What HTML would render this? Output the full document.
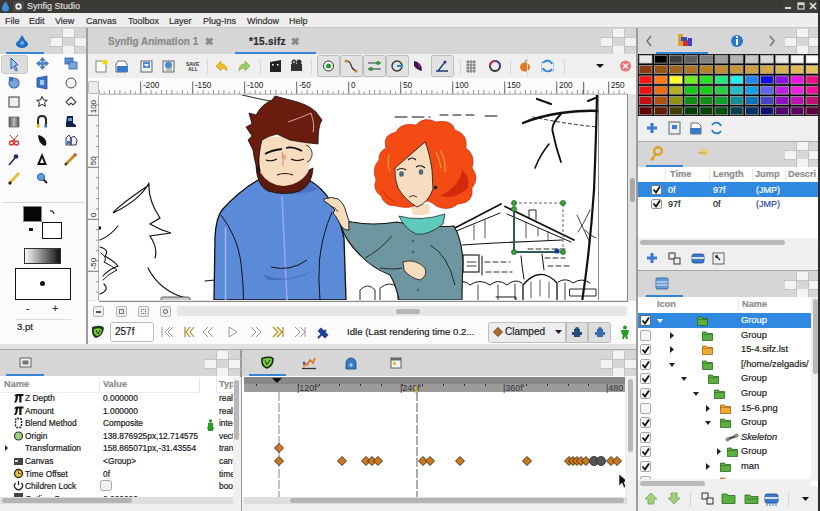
<!DOCTYPE html>
<html><head><meta charset="utf-8">
<style>
*{box-sizing:border-box}
body{-webkit-text-stroke:0.2px;margin:0;width:820px;height:511px;overflow:hidden;position:relative;background:#e6e6e6;font-family:"Liberation Sans",sans-serif;font-size:9px;color:#2e3436}
.a{position:absolute}
.hdr{background:#d6d6d6}
.grip{position:absolute;width:37px;height:26px}
.grip:before{content:"";position:absolute;left:0;top:1px;width:37px;height:25px;background:linear-gradient(#c4c4c4,#c4c4c4) 12px 0/1px 25px no-repeat,linear-gradient(#c4c4c4,#c4c4c4) 24px 0/1px 25px no-repeat,linear-gradient(#c4c4c4,#c4c4c4) 0 8px/37px 1px no-repeat,linear-gradient(#c4c4c4,#c4c4c4) 0 17px/37px 1px no-repeat}
.grip i{position:absolute;width:11px;height:8px;background:#f3f3f3;border-radius:1px}
.tb{background:#efefef}
.t{position:absolute;white-space:nowrap}
</style></head><body>
<!-- title bar -->
<div class="a" style="left:0;top:0;width:820px;height:13px;background:#3b3a37"></div>
<div class="t" style="left:27px;top:0px;font-size:9px;color:#dcdcdc;line-height:12px">Synfig Studio</div>
<svg class="a" style="left:0;top:0" width="26" height="13"><path d="M5.5 1.5 Q9 6 9 8.5 Q9 11.5 5.5 11.5 Q2 11.5 2 8.5 Q2 6 5.5 1.5 Z" fill="#3a8ee0"/><rect x="13" y="1" width="11" height="11" fill="#4a4945"/><circle cx="18.5" cy="6.5" r="3.2" fill="#eee"/><circle cx="18.5" cy="6.5" r="1.3" fill="#333"/></svg>
<svg class="a" style="left:780px;top:0" width="40" height="13"><rect x="3" y="1" width="10" height="10" rx="1.5" fill="#48474340"/><rect x="16" y="1" width="10" height="10" rx="1.5" fill="#48474340"/><rect x="28" y="1" width="10" height="10" rx="1.5" fill="#48474340"/><rect x="5" y="7" width="6" height="2" fill="#d8d8d8"/><rect x="18" y="3" width="6" height="6" fill="none" stroke="#d8d8d8" stroke-width="1.2"/><rect x="18" y="3" width="6" height="2" fill="#d8d8d8"/><path d="M30 3 l6 6 M36 3 l-6 6" stroke="#e8e8e8" stroke-width="1.6"/></svg>
<!-- menu bar -->
<div class="a" style="left:0;top:13px;width:820px;height:15px;background:#eeeeee"></div>
<div class="t" style="left:5px;top:16px;font-size:9px;line-height:11px;color:#333">File</div>
<div class="t" style="left:29px;top:16px;font-size:9px;line-height:11px;color:#333">Edit</div>
<div class="t" style="left:55px;top:16px;font-size:9px;line-height:11px;color:#333">View</div>
<div class="t" style="left:86px;top:16px;font-size:9px;line-height:11px;color:#333">Canvas</div>
<div class="t" style="left:128px;top:16px;font-size:9px;line-height:11px;color:#333">Toolbox</div>
<div class="t" style="left:169px;top:16px;font-size:9px;line-height:11px;color:#333">Layer</div>
<div class="t" style="left:203px;top:16px;font-size:9px;line-height:11px;color:#333">Plug-Ins</div>
<div class="t" style="left:247px;top:16px;font-size:9px;line-height:11px;color:#333">Window</div>
<div class="t" style="left:289px;top:16px;font-size:9px;line-height:11px;color:#333">Help</div>

<div class="a" style="left:0;top:27px;width:820px;height:1px;background:#c8c8c8"></div>
<!-- toolbox panel -->
<div class="a hdr" style="left:0;top:28px;width:86px;height:26px"></div>
<div class="a" style="left:0;top:54px;width:86px;height:290px;background:#fbfbfb"></div>
<div class="a" style="left:86px;top:28px;width:2px;height:318px;background:#9c9c9c"></div>
<!-- toolbox content -->
<svg class="a" style="left:0;top:28px" width="86" height="26">
<path d="M22 7 L28 17 L16 17 Z" fill="#1f6fc0"/><ellipse cx="22" cy="16" rx="6" ry="4" fill="#1f6fc0"/><ellipse cx="22" cy="15" rx="2" ry="2" fill="#6aaef0"/>
<rect x="6" y="24" width="38" height="2" fill="#3584d6"/>
</svg>
<div class="grip" style="left:50px;top:28px"><i style="left:13px;top:1px"></i><i style="left:1px;top:9.5px"></i><i style="left:25px;top:9.5px"></i><i style="left:13px;top:18px"></i></div>
<div class="a" style="left:1px;top:55px;width:27px;height:19px;background:#dcdcdc;border:1px solid #c9c9c9;border-radius:3px"></div>
<svg class="a" style="left:0;top:54px" width="86" height="140">
<!-- row1 -->
<path d="M11 4 L11 15 L13.5 12.5 L16 17 L17.5 16 L15 11.5 L18 11 Z" fill="#a9c8f0" stroke="#2a5aa8" stroke-width="1"/>
<g fill="#4a86d0" stroke="#2a5aa8" stroke-width="0.5"><path d="M42.5 3.5 L45 6.3 H40 Z"/><path d="M42.5 15.5 L45 12.7 H40 Z"/><path d="M36.5 9.5 L39.3 7 V12 Z"/><path d="M48.5 9.5 L45.7 7 V12 Z"/></g><path d="M42.5 6 V13 M39 9.5 H46" stroke="#3a74c0" stroke-width="1.8"/><circle cx="42.5" cy="9.5" r="1.8" fill="#5a96e0" stroke="#2a5aa8" stroke-width="0.5"/>
<rect x="65" y="4" width="8" height="6" fill="#5d8fd0" stroke="#2c5fa8" stroke-width="0.8"/><rect x="69" y="8" width="8" height="7" fill="#7fa6dc" stroke="#2c5fa8" stroke-width="0.8"/>
<!-- row2 -->
<circle cx="14" cy="29" r="5" fill="#7da2d8" stroke="#3f6fb8" stroke-width="1.2"/><rect x="9" y="23" width="4" height="4" fill="#3f6fb8"/>
<path d="M37 24 L47 22 L47 35 L37 33 Z" fill="#3b75c8" stroke="#24529a" stroke-width="0.8"/><rect x="40" y="26" width="4" height="5" fill="#a8c6ee"/>
<circle cx="71" cy="29" r="5" fill="#f4f4f4" stroke="#4a4a4a" stroke-width="1"/>
<!-- row3 -->
<rect x="9" y="43" width="10" height="10" fill="#eee" stroke="#5a5a5a" stroke-width="1.2"/>
<path d="M42 42.5 L43.6 46 L47.3 46.3 L44.5 48.7 L45.4 52.3 L42 50.4 L38.6 52.3 L39.5 48.7 L36.7 46.3 L40.4 46 Z" fill="#fff" stroke="#222" stroke-width="1"/>
<path d="M66 48 L71 43 L76 48 L73 51 L71 49 L69 51 Z" fill="#fff" stroke="#444" stroke-width="1.1"/>
<!-- row4 -->
<defs><linearGradient id="gg" x1="0" x2="1"><stop offset="0" stop-color="#555"/><stop offset="0.5" stop-color="#bbb"/><stop offset="1" stop-color="#555"/></linearGradient></defs>
<rect x="9" y="63" width="10" height="10" fill="url(#gg)" stroke="#666" stroke-width="0.8"/>
<path d="M38 73 L38 66 Q38 62 42 62 Q46 62 46 66 L46 73" fill="none" stroke="#2a2a2a" stroke-width="2"/><rect x="37" y="70" width="2.5" height="3.5" fill="#e0b000"/><rect x="44.5" y="70" width="2.5" height="3.5" fill="#3070d0"/>
<path d="M67 62 L73 62 L73 69 L76 71 L76 73 L66 73 L66 69 Z" fill="#14204a"/><rect x="68" y="64" width="4" height="3" fill="#6b8fd8"/>
<!-- row5 -->
<path d="M10 81 L15 87 M18 81 L13 87" stroke="#c03030" stroke-width="1"/><circle cx="11.5" cy="89" r="2" fill="none" stroke="#e03030" stroke-width="1.4"/><circle cx="16.5" cy="89" r="2" fill="none" stroke="#e03030" stroke-width="1.4"/>
<path d="M38 81 Q44 82 46 87 Q47 91 45 92 Q40 90 39 86 Q38 83 38 81 Z" fill="#111"/>
<path d="M66 84 L69 81 L71 84 L71 91 L66 91 Z M71 84 L74 82 L77 86 L76 91 L71 91 Z" fill="#eef" stroke="#223" stroke-width="0.9"/><rect x="67" y="87" width="3" height="3" fill="#4a70c0"/>
<!-- row6 -->
<path d="M9 111 L15 104" stroke="#1c2c6a" stroke-width="1.6"/><circle cx="16" cy="102.5" r="2.3" fill="#1c2c6a"/>
<path d="M42 99 L47 111 L37 111 Z" fill="#111"/><path d="M42 104 L44 109 L40 109 Z" fill="#fff"/>
<path d="M65 111 L76 100" stroke="#c8861a" stroke-width="2.6"/><path d="M65 111 L67 109" stroke="#333" stroke-width="2"/><path d="M74.5 101.5 L76 100" stroke="#d04a2a" stroke-width="2.6"/>
<!-- row7 -->
<path d="M9 130 L19 119" stroke="#e8c030" stroke-width="2.8"/><path d="M9 130 L11 128" stroke="#222" stroke-width="2.5"/>
<circle cx="41" cy="123" r="3.6" fill="#5a9ee0" stroke="#2a6ab8" stroke-width="1"/><path d="M43.5 125.5 L47 129" stroke="#222" stroke-width="2"/>
</svg>
<div class="a" style="left:2px;top:202px;width:83px;height:1px;background:#d8d8d8"></div>
<div class="a" style="left:42px;top:222px;width:20px;height:17px;background:#fff;border:1px solid #111"></div>
<div class="a" style="left:23px;top:206px;width:19px;height:16px;background:#060606;border:1px solid #888"></div>
<div class="a" style="left:29px;top:228px;width:4px;height:3px;background:#111"></div>
<svg class="a" style="left:49px;top:209px" width="8" height="8"><path d="M1 2 Q4 1 5 5" stroke="#222" stroke-width="1.2" fill="none"/></svg>
<div class="a" style="left:24px;top:248px;width:37px;height:16px;border:1px solid #333;background:linear-gradient(to right,#fafafa,#111)"></div>
<div class="a" style="left:15px;top:268px;width:56px;height:32px;border:1.5px solid #111;background:#fff"></div>
<div class="a" style="left:40px;top:281px;width:5px;height:5px;border-radius:50%;background:#111"></div>
<div class="t" style="left:26px;top:303px;font-size:10px;color:#333">-</div>
<div class="t" style="left:52px;top:302px;font-size:11px;color:#333">+</div>
<div class="a" style="left:15px;top:319px;width:56px;height:1px;background:#ddd"></div>
<div class="t" style="left:17px;top:321px;font-size:9.5px;color:#222">3.pt</div>


<!-- canvas panel -->
<div class="a hdr" style="left:88px;top:28px;width:549px;height:26px"></div>
<div class="a tb" style="left:88px;top:54px;width:549px;height:24px"></div>
<div class="a" style="left:88px;top:78px;width:539px;height:17px;background:#f7f7f7"></div>
<div class="a" style="left:88px;top:95px;width:11px;height:205px;background:#f7f7f7"></div>
<div class="a" style="left:99px;top:95px;width:528px;height:205px;background:#ffffff"></div>
<div class="a" style="left:628px;top:94px;width:8px;height:207px;background:#e2e2e2"></div><div class="a" style="left:627px;top:78px;width:9px;height:16px;background:#fafafa"></div>

<!-- tabs -->
<div class="t" style="left:108px;top:35px;font-size:10px;font-weight:bold;color:#8a8a8a;line-height:13px">Synfig Animation 1</div>
<div class="t" style="left:205px;top:35px;font-size:10px;font-weight:bold;color:#8a8a8a;line-height:13px">&#x2716;</div>
<div class="t" style="left:249px;top:35px;font-size:10px;font-weight:bold;color:#2b2b2b;line-height:13px;letter-spacing:0.3px">*15.sifz</div>
<div class="t" style="left:291px;top:35px;font-size:10px;font-weight:bold;color:#8a8a8a;line-height:13px">&#x2716;</div>
<div class="a" style="left:235px;top:52px;width:81px;height:2px;background:#3584d6"></div>
<div class="grip" style="left:600px;top:28px"><i style="left:13px;top:1px"></i><i style="left:1px;top:9.5px"></i><i style="left:25px;top:9.5px"></i><i style="left:13px;top:18px"></i></div>
<!-- toolbar -->
<svg class="a" style="left:88px;top:54px" width="549" height="24">
<rect x="8" y="7" width="10" height="11" fill="#fdfdf5" stroke="#777" stroke-width="0.9"/><circle cx="17" cy="8" r="2.6" fill="#f0e000"/>
<path d="M30 7 h7 l2 3 v8 h-11 v-8 z" fill="#fff" stroke="#444" stroke-width="0.8"/><rect x="29" y="12" width="11" height="6" rx="1" fill="#3a78c8"/>
<rect x="53" y="7" width="11" height="11" fill="#f2f2f2" stroke="#555" stroke-width="0.9"/><rect x="55" y="8" width="7" height="6" fill="#4a8ad8"/><path d="M56 10 l2.5 3 l2.5-3" fill="#fff"/>
<rect x="75" y="7" width="11" height="11" fill="#f2f2f2" stroke="#555" stroke-width="0.9"/><circle cx="80.5" cy="11" r="3.5" fill="#4a8ad8"/><rect x="78" y="14" width="6" height="3" fill="#bbb"/>
<text x="98" y="11.5" font-size="5" fill="#333" font-weight="bold">SAVE</text><text x="100" y="17" font-size="5" fill="#333" font-weight="bold">ALL</text>
<rect x="119" y="5" width="1" height="15" fill="#d8d8d8"/>
<path d="M128 12 l5 -5 v3 q6 0 6 7 q-2 -3 -6 -3 v3 z" fill="#f0c020" stroke="#c09000" stroke-width="0.6"/>
<path d="M162 12 l-5 -5 v3 q-6 0 -6 7 q2 -3 6 -3 v3 z" fill="#9ed060" stroke="#70a030" stroke-width="0.6"/>
<rect x="172" y="5" width="1" height="15" fill="#d8d8d8"/>
<rect x="182" y="8" width="11" height="10" fill="#222"/><path d="M182 8 l11 -2 v2 z" fill="#222"/><rect x="184" y="10" width="1.5" height="1.5" fill="#fff"/><rect x="189" y="10" width="1.5" height="1.5" fill="#fff"/>
<rect x="203" y="10" width="11" height="7" fill="#333"/><circle cx="206" cy="8" r="2.5" fill="#333"/><circle cx="211" cy="8" r="2.5" fill="#333"/><circle cx="206" cy="8" r="1" fill="#ccc"/>
<rect x="223" y="5" width="1" height="15" fill="#d8d8d8"/>
<rect x="229.5" y="1.5" width="22" height="21" rx="2" fill="#e2e2e2" stroke="#bdbdbd"/>
<rect x="252.5" y="1.5" width="22" height="21" rx="2" fill="#e2e2e2" stroke="#bdbdbd"/>
<rect x="275.5" y="1.5" width="22" height="21" rx="2" fill="#e2e2e2" stroke="#bdbdbd"/>
<rect x="298.5" y="1.5" width="22" height="21" rx="2" fill="#e2e2e2" stroke="#bdbdbd"/>
<circle cx="240.5" cy="12" r="5" fill="#fff" stroke="#333" stroke-width="1"/><circle cx="240.5" cy="12" r="2.5" fill="#2a9a3a"/>
<path d="M258 7 q4 0 5 4 q1 4 5 6" fill="none" stroke="#333" stroke-width="1.2"/><circle cx="258" cy="7" r="1.5" fill="#d08020"/><circle cx="268" cy="17" r="1.5" fill="#d08020"/>
<path d="M280 9 h13 M280 15 h13" stroke="#333" stroke-width="1.1"/><circle cx="290" cy="9" r="2" fill="#2a9a3a"/><circle cx="283" cy="15" r="2" fill="#2a9a3a"/>
<circle cx="309" cy="12" r="5" fill="none" stroke="#333" stroke-width="1.4"/><path d="M309 12 h6" stroke="#2a8ac8" stroke-width="2"/>
<path d="M326 7 q8 1 8 10 q-5 -1 -8 -5 z" fill="#401050"/><path d="M330 9 l2 5" stroke="#c03060" stroke-width="1"/>
<rect x="343.5" y="1.5" width="22" height="21" rx="2" fill="#e2e2e2" stroke="#bdbdbd"/>
<path d="M348 17 h12 M350 17 l7 -9" stroke="#223a7a" stroke-width="1.3" fill="none"/><circle cx="357" cy="8" r="1.5" fill="#223a7a"/>
<rect x="372" y="5" width="1" height="15" fill="#d8d8d8"/>
<path d="M378 8 h10 M378 11 h10 M378 14 h10 M378 17 h10 M380 6 v13 M383 6 v13 M386 6 v13" stroke="#555" stroke-width="0.8"/>
<circle cx="407" cy="12" r="5" fill="none" stroke="#333" stroke-width="2"/><path d="M402 12 a5 5 0 0 1 5 -5" stroke="#d03030" stroke-width="2" fill="none"/><path d="M407 7 a5 5 0 0 1 5 5" stroke="#3050c0" stroke-width="2" fill="none"/>
<rect x="422" y="5" width="1" height="15" fill="#d8d8d8"/>
<ellipse cx="437" cy="13" rx="5" ry="4.5" fill="#e07a20"/><path d="M437 8 q2 -3 3 -3" stroke="#a05010" fill="none"/>
<path d="M455 9 a5 5 0 0 1 9 1 M464 15 a5 5 0 0 1 -9 -1" fill="none" stroke="#2a78c8" stroke-width="1.8"/><rect x="453.5" y="8" width="12" height="9" fill="none" stroke="#7ab0e8" stroke-width="0.6"/>
<rect x="476" y="5" width="1" height="15" fill="#d8d8d8"/>
<path d="M508 10 h8 l-4 4 z" fill="#111"/>
<circle cx="537.5" cy="12" r="5.5" fill="#e87878"/><path d="M535 9.5 l5 5 M540 9.5 l-5 5" stroke="#fff" stroke-width="1.3"/>
</svg>
<div class="a" style="left:527px;top:55px;width:1px;height:22px;background:#ddd"></div>
<!-- top ruler -->
<div class="a" style="left:88px;top:78px;width:540px;height:16px;background:#fcfcfc"></div><svg class="a" style="left:88px;top:78px" width="540" height="17"><path d="M11.1 12 V16" stroke="#777" stroke-width="0.8"/><path d="M16.3 13.5 V16" stroke="#888" stroke-width="0.8"/><path d="M21.5 12 V16" stroke="#777" stroke-width="0.8"/><path d="M26.7 12 V16" stroke="#777" stroke-width="0.8"/><path d="M31.9 12 V16" stroke="#777" stroke-width="0.8"/><path d="M37.1 13.5 V16" stroke="#888" stroke-width="0.8"/><path d="M42.3 12 V16" stroke="#777" stroke-width="0.8"/><path d="M47.5 13.5 V16" stroke="#888" stroke-width="0.8"/><path d="M52.7 3.5 V16" stroke="#555" stroke-width="0.9"/><text x="54.9" y="10.3" font-size="8.2" fill="#222">-200</text><path d="M57.9 13.5 V16" stroke="#888" stroke-width="0.8"/><path d="M63.1 12 V16" stroke="#777" stroke-width="0.8"/><path d="M68.3 13.5 V16" stroke="#888" stroke-width="0.8"/><path d="M73.5 12 V16" stroke="#777" stroke-width="0.8"/><path d="M78.7 12 V16" stroke="#777" stroke-width="0.8"/><path d="M83.9 12 V16" stroke="#777" stroke-width="0.8"/><path d="M89.1 13.5 V16" stroke="#888" stroke-width="0.8"/><path d="M94.3 12 V16" stroke="#777" stroke-width="0.8"/><path d="M99.5 13.5 V16" stroke="#888" stroke-width="0.8"/><path d="M104.7 3.5 V16" stroke="#555" stroke-width="0.9"/><text x="106.9" y="10.3" font-size="8.2" fill="#222">-150</text><path d="M109.9 13.5 V16" stroke="#888" stroke-width="0.8"/><path d="M115.1 12 V16" stroke="#777" stroke-width="0.8"/><path d="M120.3 13.5 V16" stroke="#888" stroke-width="0.8"/><path d="M125.5 12 V16" stroke="#777" stroke-width="0.8"/><path d="M130.7 12 V16" stroke="#777" stroke-width="0.8"/><path d="M135.9 12 V16" stroke="#777" stroke-width="0.8"/><path d="M141.1 13.5 V16" stroke="#888" stroke-width="0.8"/><path d="M146.3 12 V16" stroke="#777" stroke-width="0.8"/><path d="M151.5 13.5 V16" stroke="#888" stroke-width="0.8"/><path d="M156.7 3.5 V16" stroke="#555" stroke-width="0.9"/><text x="158.9" y="10.3" font-size="8.2" fill="#222">-100</text><path d="M161.9 13.5 V16" stroke="#888" stroke-width="0.8"/><path d="M167.1 12 V16" stroke="#777" stroke-width="0.8"/><path d="M172.3 13.5 V16" stroke="#888" stroke-width="0.8"/><path d="M177.5 12 V16" stroke="#777" stroke-width="0.8"/><path d="M182.7 12 V16" stroke="#777" stroke-width="0.8"/><path d="M187.9 12 V16" stroke="#777" stroke-width="0.8"/><path d="M193.1 13.5 V16" stroke="#888" stroke-width="0.8"/><path d="M198.3 12 V16" stroke="#777" stroke-width="0.8"/><path d="M203.5 13.5 V16" stroke="#888" stroke-width="0.8"/><path d="M208.7 3.5 V16" stroke="#555" stroke-width="0.9"/><text x="210.9" y="10.3" font-size="8.2" fill="#222">-50</text><path d="M213.9 13.5 V16" stroke="#888" stroke-width="0.8"/><path d="M219.1 12 V16" stroke="#777" stroke-width="0.8"/><path d="M224.3 13.5 V16" stroke="#888" stroke-width="0.8"/><path d="M229.5 12 V16" stroke="#777" stroke-width="0.8"/><path d="M234.7 12 V16" stroke="#777" stroke-width="0.8"/><path d="M239.9 12 V16" stroke="#777" stroke-width="0.8"/><path d="M245.1 13.5 V16" stroke="#888" stroke-width="0.8"/><path d="M250.3 12 V16" stroke="#777" stroke-width="0.8"/><path d="M255.5 13.5 V16" stroke="#888" stroke-width="0.8"/><path d="M260.7 3.5 V16" stroke="#555" stroke-width="0.9"/><text x="262.9" y="10.3" font-size="8.2" fill="#222">0</text><path d="M265.9 13.5 V16" stroke="#888" stroke-width="0.8"/><path d="M271.1 12 V16" stroke="#777" stroke-width="0.8"/><path d="M276.3 13.5 V16" stroke="#888" stroke-width="0.8"/><path d="M281.5 12 V16" stroke="#777" stroke-width="0.8"/><path d="M286.7 12 V16" stroke="#777" stroke-width="0.8"/><path d="M291.9 12 V16" stroke="#777" stroke-width="0.8"/><path d="M297.1 13.5 V16" stroke="#888" stroke-width="0.8"/><path d="M302.3 12 V16" stroke="#777" stroke-width="0.8"/><path d="M307.5 13.5 V16" stroke="#888" stroke-width="0.8"/><path d="M312.7 3.5 V16" stroke="#555" stroke-width="0.9"/><text x="314.9" y="10.3" font-size="8.2" fill="#222">50</text><path d="M317.9 13.5 V16" stroke="#888" stroke-width="0.8"/><path d="M323.1 12 V16" stroke="#777" stroke-width="0.8"/><path d="M328.3 13.5 V16" stroke="#888" stroke-width="0.8"/><path d="M333.5 12 V16" stroke="#777" stroke-width="0.8"/><path d="M338.7 12 V16" stroke="#777" stroke-width="0.8"/><path d="M343.9 12 V16" stroke="#777" stroke-width="0.8"/><path d="M349.1 13.5 V16" stroke="#888" stroke-width="0.8"/><path d="M354.3 12 V16" stroke="#777" stroke-width="0.8"/><path d="M359.5 13.5 V16" stroke="#888" stroke-width="0.8"/><path d="M364.7 3.5 V16" stroke="#555" stroke-width="0.9"/><text x="366.9" y="10.3" font-size="8.2" fill="#222">100</text><path d="M369.9 13.5 V16" stroke="#888" stroke-width="0.8"/><path d="M375.1 12 V16" stroke="#777" stroke-width="0.8"/><path d="M380.3 13.5 V16" stroke="#888" stroke-width="0.8"/><path d="M385.5 12 V16" stroke="#777" stroke-width="0.8"/><path d="M390.7 12 V16" stroke="#777" stroke-width="0.8"/><path d="M395.9 12 V16" stroke="#777" stroke-width="0.8"/><path d="M401.1 13.5 V16" stroke="#888" stroke-width="0.8"/><path d="M406.3 12 V16" stroke="#777" stroke-width="0.8"/><path d="M411.5 13.5 V16" stroke="#888" stroke-width="0.8"/><path d="M416.7 3.5 V16" stroke="#555" stroke-width="0.9"/><text x="418.9" y="10.3" font-size="8.2" fill="#222">150</text><path d="M421.9 13.5 V16" stroke="#888" stroke-width="0.8"/><path d="M427.1 12 V16" stroke="#777" stroke-width="0.8"/><path d="M432.3 13.5 V16" stroke="#888" stroke-width="0.8"/><path d="M437.5 12 V16" stroke="#777" stroke-width="0.8"/><path d="M442.7 12 V16" stroke="#777" stroke-width="0.8"/><path d="M447.9 12 V16" stroke="#777" stroke-width="0.8"/><path d="M453.1 13.5 V16" stroke="#888" stroke-width="0.8"/><path d="M458.3 12 V16" stroke="#777" stroke-width="0.8"/><path d="M463.5 13.5 V16" stroke="#888" stroke-width="0.8"/><path d="M468.7 3.5 V16" stroke="#555" stroke-width="0.9"/><text x="470.9" y="10.3" font-size="8.2" fill="#222">200</text><path d="M473.9 13.5 V16" stroke="#888" stroke-width="0.8"/><path d="M479.1 12 V16" stroke="#777" stroke-width="0.8"/><path d="M484.3 13.5 V16" stroke="#888" stroke-width="0.8"/><path d="M489.5 12 V16" stroke="#777" stroke-width="0.8"/><path d="M494.7 12 V16" stroke="#777" stroke-width="0.8"/><path d="M499.9 12 V16" stroke="#777" stroke-width="0.8"/><path d="M505.1 13.5 V16" stroke="#888" stroke-width="0.8"/><path d="M510.3 12 V16" stroke="#777" stroke-width="0.8"/><path d="M515.5 13.5 V16" stroke="#888" stroke-width="0.8"/><path d="M520.7 3.5 V16" stroke="#555" stroke-width="0.9"/><text x="522.9" y="10.3" font-size="8.2" fill="#222">250</text><path d="M525.9 13.5 V16" stroke="#888" stroke-width="0.8"/><path d="M531.1 12 V16" stroke="#777" stroke-width="0.8"/><path d="M536.3 13.5 V16" stroke="#888" stroke-width="0.8"/><path d="M11 16.2 H540" stroke="#999" stroke-width="0.8"/><path d="M495.7 4 V16" stroke="#444" stroke-width="0.9"/></svg>
<div class="a" style="left:88px;top:81px;width:11px;height:13px;background:#ececec;border:1px solid #bbb;border-radius:2px"></div>
<!-- left ruler -->
<svg class="a" style="left:88px;top:95px" width="11" height="205"><path d="M8 197.1 H11" stroke="#777" stroke-width="0.8"/><path d="M8 186.7 H11" stroke="#777" stroke-width="0.8"/><path d="M0 176.3 H11" stroke="#555" stroke-width="0.8"/><text transform="translate(7.5 174.3) rotate(-90)" font-size="8" fill="#222">-50</text><path d="M8 165.9 H11" stroke="#777" stroke-width="0.8"/><path d="M8 155.5 H11" stroke="#777" stroke-width="0.8"/><path d="M8 145.1 H11" stroke="#777" stroke-width="0.8"/><path d="M8 134.7 H11" stroke="#777" stroke-width="0.8"/><path d="M0 124.3 H11" stroke="#555" stroke-width="0.8"/><text transform="translate(7.5 122.3) rotate(-90)" font-size="8" fill="#222">0</text><path d="M8 113.9 H11" stroke="#777" stroke-width="0.8"/><path d="M8 103.5 H11" stroke="#777" stroke-width="0.8"/><path d="M8 93.1 H11" stroke="#777" stroke-width="0.8"/><path d="M8 82.7 H11" stroke="#777" stroke-width="0.8"/><path d="M0 72.3 H11" stroke="#555" stroke-width="0.8"/><text transform="translate(7.5 70.3) rotate(-90)" font-size="8" fill="#222">50</text><path d="M8 61.9 H11" stroke="#777" stroke-width="0.8"/><path d="M8 51.5 H11" stroke="#777" stroke-width="0.8"/><path d="M8 41.1 H11" stroke="#777" stroke-width="0.8"/><path d="M8 30.7 H11" stroke="#777" stroke-width="0.8"/><path d="M0 20.3 H11" stroke="#555" stroke-width="0.8"/><text transform="translate(7.5 18.3) rotate(-90)" font-size="8" fill="#222">100</text><path d="M8 9.9 H11" stroke="#777" stroke-width="0.8"/><path d="M10.5 0 V205" stroke="#999" stroke-width="0.8"/></svg>
<!-- v scrollbar -->
<div class="a" style="left:630px;top:178px;width:5px;height:24px;background:#a8a8a8;border-radius:3px"></div>
<div class="a" style="left:598px;top:95px;width:1px;height:205px;background:#888"></div>

<svg class="a" style="left:99px;top:95px" width="499" height="205" viewBox="99 95 499 205">
<g fill="none" stroke="#111" stroke-linecap="round">
<!-- top line -->
<path d="M242 95 Q262 100 282 103" stroke-width="0.9"/>
<!-- left tree -->
<path d="M149 183 Q140 200 113 213 Q118 206 149 185" stroke-width="1.1"/>
<path d="M149 184 Q148 200 160 218 L150 224 Q160 230 171 233 L150 236 Q158 248 155 258" stroke-width="1.2"/>
<path d="M148 268 Q160 292 189 299" stroke-width="1.2"/>
<path d="M118 226 Q110 236 100 240 M100 247 Q110 250 105 256 Q115 262 118 266 Q108 270 103 276 M104 284 Q110 290 100 294" stroke-width="1.1"/>
<path d="M205 281 L215 280" stroke-width="1"/><path d="M101 253 Q108 258 104 262 Q112 266 117 270 Q108 274 103 280" stroke-width="1"/>
<!-- right tree -->
<path d="M597 95 Q596 140 594 190 Q590 250 582 302" stroke-width="2.2"/>
<path d="M598 111 Q585 110 561 113 Q540 116 523 123" stroke-width="2.4"/>
<path d="M561 114 Q550 125 553 133 Q556 148 561 162" stroke-width="1.8"/>
<path d="M549 144 Q540 155 535 168" stroke-width="1.6"/>
<path d="M537 99 L551 104" stroke-width="2.2"/><path d="M588 101 L598 97" stroke-width="2"/>
<path d="M533 117 Q565 124 598 127" stroke-width="0.9" stroke-dasharray="3 3"/>
<path d="M440 115 H478" stroke-width="1.1" stroke-dasharray="8 5"/>
<path d="M395 117 H430 M485 116 H500" stroke-width="1.1" stroke-dasharray="12 5"/>
<!-- house -->
<path d="M451 230 L501 204 M505 206.5 L574 240" stroke-width="1.7"/>
<path d="M454 232 L500 213 M507 214 L571 242" stroke-width="1"/>
<path d="M462 245 Q510 242 562 240" stroke-width="1.1"/>
<path d="M474 225 V240 M485 220 V238 M526 222 V238 M538 228 V236 M548 232 V240" stroke-width="0.7"/>
<path d="M529 218 V210 H536 V220" stroke-width="0.9"/>
<rect x="463" y="255" width="16" height="17" stroke-width="1.1"/><path d="M467 262 H476 M467 266 H476" stroke-width="0.8"/>
<path d="M482 256 V275 M521 256 Q522 268 524 279 M542 254 Q543 262 544 270" stroke-width="1"/>
<path d="M485 262 H510 M486 272 H512 M545 258 H565 M548 266 H570 M528 249 H566" stroke-width="0.9" stroke-dasharray="5 3"/>
<path d="M523 300 V285 Q540 265 557 283 V300" stroke-width="1.3"/>
<path d="M531 282 V298 M540 280 V296 M549 282 V298" stroke-width="0.7"/>
<path d="M455 285 Q463 278 470 285 Q480 278 490 285 Q498 278 507 285 Q515 278 522 283 M558 282 Q566 277 573 283 Q582 277 590 283" stroke-width="1"/>
<path d="M458 286 V300 M478 285 V300 M498 285 V300 M515 284 V300 M565 283 V300" stroke-width="0.8"/>
<path d="M360 300 V290 Q368 282 375 290 V300 M380 300 V288 Q390 280 398 288 V300" stroke-width="0.9"/>
<path d="M570 289 h26 v7 h-26 z" stroke-width="0.9"/>
<path d="M590 210 Q583 225 578 232 M577 215 Q583 228 590 243 M585 230 Q590 236 596 238" stroke-width="0.8"/>
<path d="M496 297 h20 v5" stroke-width="1"/>
</g>
<circle cx="99.5" cy="228" r="1.8" fill="#111"/><rect x="161" y="297" width="29" height="6" rx="2" fill="#ccc" stroke="#333" stroke-width="0.8"/>
<!-- man jacket -->
<path d="M214 300 L215 237 Q216 218 222 210 Q240 190 260 179 L309 180 Q322 188 330 200 Q338 212 344 238 L346 300 Z" fill="#5b8bd8" stroke="#111" stroke-width="1.3"/>
<path d="M262 186 Q283 200 318 190 L309 181 L260 180 Z" fill="#4a74c8"/>
<path d="M282 196 L287 300" stroke="#a0a0f0" stroke-width="1.6"/>
<path d="M225.5 227 V300" stroke="#a8b8f8" stroke-width="1.4"/>
<path d="M221 215 Q236 235 240 257 Q243 275 243.5 300 M332 212 Q322 235 319.5 260 Q318 280 320 300 M271 267 Q290 272 307 260" fill="none" stroke="#111" stroke-width="1"/>
<path d="M262 274 Q290 286 320 266 Q300 282 268 280 Z" fill="#4670c0"/>
<!-- beard & face -->
<path d="M256 166 Q257 186 268 191 Q284 196 300 191 Q312 185 313 168 L309 170 Q303 183 284 185 Q266 183 260 168 Z" fill="#5a1a0e" stroke="#111" stroke-width="0.8"/>
<path d="M258 138 Q257 160 260 172 Q268 185 283 186 Q300 185 308 172 Q311 158 310 140 Q290 134 258 138 Z" fill="#f8dcbf"/><path d="M259 140 Q257 158 260 172" fill="none" stroke="#111" stroke-width="1.4"/>
<path d="M306 145 Q313 148 312 156 Q310 162 307 162" fill="#f8dcbf" stroke="#111" stroke-width="0.8"/>
<path d="M265 154 Q272 150 282 149 M286 148 Q292 146 302 151" fill="none" stroke="#111" stroke-width="1.8"/><path d="M282 152 Q284 160 283 166" fill="none" stroke="#c89070" stroke-width="1"/>
<path d="M266 160 Q271 162 277 159 M291 159 Q297 162 304 159 M277 175 Q285 172 293 175" fill="none" stroke="#111" stroke-width="1.1"/>
<circle cx="284" cy="157" r="2.6" fill="#e89070" opacity="0.6"/>
<!-- man hair -->
<path d="M275 96 Q282 98 290 100 Q308 104 316 112 L322 120 Q318 125 318 144 Q300 142 290 140 Q283 137 277 134 Q268 136 262 140 Q259 150 258 172 Q254 160 253 150 L248 140 L252 136 L246 127 L252 124 L249 113 L256 115 Q262 104 272 100 Z" fill="#6a1c0e" stroke="#111" stroke-width="0.8"/>
<path d="M288 122 Q300 118 311 113 M311 113 Q315 125 313 132" stroke="#f0c8c0" stroke-width="0.8" fill="none"/>
<!-- woman sweater -->
<path d="M341 226 Q346 220 352 222 Q372 226 397 222 Q425 228 454 226 Q462 240 463 262 Q462 285 462 300 L399 300 Q396 285 390 275 Q372 268 360 255 Q345 240 341 226 Z" fill="#6d96a0" stroke="#111" stroke-width="1.1"/>
<path d="M365 258 Q380 250 392 236 M430 245 Q448 255 455 285 M380 268 Q395 270 402 268" fill="none" stroke="#111" stroke-width="0.8"/>
<path d="M403 262 Q415 258 425 268 Q428 276 420 280 Q410 278 404 270 Z" fill="#f8dcbf" stroke="#111" stroke-width="0.8"/>
<circle cx="413" cy="241" r="1.3" fill="#3f6070"/><circle cx="413" cy="252" r="1.3" fill="#3f6070"/><circle cx="418" cy="290" r="1.3" fill="#3f6070"/>
<!-- woman hand on shoulder -->
<path d="M324 199 Q332 196 338 199 Q344 203 346 212 Q350 220 349 230 Q343 231 339 222 Q336 216 333 213 L335 210 Q330 204 324 201 Z" fill="#f8dcbf" stroke="#111" stroke-width="0.9"/><path d="M330 206 Q336 207 338 212" fill="none" stroke="#111" stroke-width="0.7"/>
<!-- scarf -->
<path d="M399 216 Q420 222 445 214 L443 224 Q428 236 416 234 Q404 228 399 216 Z" fill="#5ecabb" stroke="#111" stroke-width="0.7"/>
<path d="M411 204 L412 214 Q420 217 430 213 L429 204 Z" fill="#f8dcbf"/>
<!-- woman hair -->
<path d="M386 148 Q382 135 396 132 Q401 122 416 125 Q424 116 436 122 Q452 119 455 130 Q468 134 466 148 Q476 156 472 168 Q480 178 472 188 Q474 203 458 204 Q448 212 436 206 Q428 198 420 203 Q410 210 396 206 Q384 206 381 196 Q372 190 376 180 Q371 168 379 160 Q378 152 386 148 Z" fill="#f44a14" stroke="#b82a08" stroke-width="0.6"/>
<path d="M378 182 Q384 196 398 204 Q388 200 383 192 Z M440 196 Q455 200 468 188 Q470 175 462 170 Q460 186 440 196 Z" fill="#d42a0c"/>
<path d="M395 168 L425 142 Q429 150 432 170 L433 189 Q428 203 417 207 Q405 200 398 188 Q394 178 395 168 Z" fill="#f8dcbf" stroke="#111" stroke-width="0.8"/>
<path d="M397 170 Q402 167 406 170 M416 167 Q421 164 425 168 M408 160 Q412 156 416 160" fill="none" stroke="#111" stroke-width="1.1"/>
<ellipse cx="401.5" cy="174" rx="2.3" ry="2.8" fill="#4a6a7a"/><ellipse cx="421" cy="172" rx="2.3" ry="2.8" fill="#4a6a7a"/>
<path d="M409 197 Q413 194 417 197" fill="none" stroke="#111" stroke-width="0.8"/>
<path d="M436 152 Q440 160 441 168 M440 150 Q446 160 445 172 M389 155 Q387 165 390 172" fill="none" stroke="#f8b040" stroke-width="1"/>
<circle cx="435.5" cy="187.5" r="1.8" fill="#223"/>
<!-- selection handles -->
<rect x="514" y="203" width="49" height="49" fill="none" stroke="#555" stroke-width="0.9" stroke-dasharray="3 2"/>
<path d="M514 207 V252 H558" stroke="#2a5a5a" stroke-width="2" fill="none"/>
<circle cx="514" cy="203" r="2.6" fill="#3aa03a" stroke="#1a601a" stroke-width="0.6"/>
<circle cx="514" cy="209" r="2.6" fill="#3aa03a" stroke="#1a601a" stroke-width="0.6"/>
<circle cx="563" cy="203" r="2.6" fill="#3aa03a" stroke="#1a601a" stroke-width="0.6"/>
<circle cx="514" cy="252" r="2.6" fill="#3aa03a" stroke="#1a601a" stroke-width="0.6"/>
<circle cx="563" cy="252" r="2.6" fill="#3aa03a" stroke="#1a601a" stroke-width="0.6"/>
<circle cx="557" cy="251" r="2.6" fill="#1a3a9a"/>
</svg>


<!-- canvas bottom rows -->
<div class="a" style="left:88px;top:301px;width:548px;height:44px;background:#fbfbfb"></div><div class="a" style="left:99px;top:300.5px;width:529px;height:1px;background:#8a8a8a"></div><div class="a" style="left:627px;top:94px;width:1px;height:207px;background:#8a8a8a"></div>
<div class="a" style="left:93px;top:306px;width:11px;height:11px;border:1px solid #b4b4b4;border-radius:2px;background:#eee"></div>
<div class="a" style="left:96px;top:311px;width:5px;height:1.5px;background:#555"></div>
<div class="a" style="left:116px;top:306px;width:11px;height:11px;border:1px solid #b4b4b4;border-radius:2px;background:#eee"></div>
<div class="a" style="left:119px;top:309px;width:5px;height:5px;border:1px solid #777"></div>
<div class="a" style="left:138px;top:306px;width:11px;height:11px;border:1px solid #b4b4b4;border-radius:2px;background:#eee"></div>
<div class="a" style="left:141px;top:309px;width:5px;height:5px;border:1px dotted #666"></div>
<div class="a" style="left:160px;top:306px;width:11px;height:11px;border:1px solid #b4b4b4;border-radius:2px;background:#eee"></div>
<div class="a" style="left:163px;top:309px;width:5px;height:5px;border:1px solid #555;border-radius:50%"></div>
<div class="a" style="left:177px;top:306px;width:450px;height:10px;background:#e6e6e6;border-radius:2px"></div>
<div class="a" style="left:396px;top:309px;width:24px;height:5px;background:#b6b6b6;border-radius:3px"></div>
<svg class="a" style="left:90px;top:324px" width="16" height="16"><path d="M2 3 Q12 0 14 4 Q13 12 6 14 Q1 12 2 3 Z" fill="#1a3a1a"/><path d="M4 5 Q11 3 12 6 Q11 11 7 12 Q3 10 4 5 Z" fill="#7acc3a"/><path d="M6 6 l2 4 l2-4" stroke="#1a3a1a" fill="none" stroke-width="1"/></svg>
<div class="a" style="left:110px;top:322px;width:44px;height:20px;background:#fff;border:1px solid #bcbcbc;border-radius:3px"></div>
<div class="t" style="left:115px;top:326px;font-size:10px;color:#222">257f</div>
<svg class="a" style="left:158px;top:324px" width="175" height="17">
<g fill="none" stroke="#9a9a9a" stroke-width="1">
<path d="M4 3 v10 M12 3 l-5 5 l5 5 M15 3 l-5 5 l5 5"/>
<path d="M50 3 l-5 5 l5 5 M55 3 l-5 5 l5 5"/>
<path d="M71 3 v10 l8 -5 z"/>
<path d="M93 3 l5 5 l-5 5 M98 3 l5 5 l-5 5"/>
<path d="M137 3 l5 5 l-5 5 M142 3 l5 5 l-5 5 M147 3 v10"/>
</g>
<g fill="none" stroke="#b09020" stroke-width="1.2"><path d="M27 3 v10 M32 3 l-4 5 l4 5 M36 3 l-4 5 l4 5"/><path d="M115 3 l5 5 l-5 5 M119 3 l5 5 l-5 5 M125 3 v10"/></g>
<path d="M160 14 l8 -8 M163 5 l6 6 l-2 2 l-6 -6 z" stroke="#1a3a8a" stroke-width="2" fill="#2a5ac8"/>
</svg>
<div class="t" style="left:347px;top:326px;font-size:9.6px;color:#222">Idle (Last rendering time 0.2...</div>
<div class="a" style="left:488px;top:322px;width:78px;height:21px;background:#ededed;border:1px solid #bdbdbd;border-radius:3px 0 0 3px"></div>
<svg class="a" style="left:493px;top:327px" width="10" height="10"><path d="M5 0.5 L9.5 5 L5 9.5 L0.5 5 Z" fill="#b86a20" stroke="#333" stroke-width="0.8"/></svg>
<div class="t" style="left:505px;top:326px;font-size:10px;color:#222">Clamped</div>
<svg class="a" style="left:555px;top:329px" width="8" height="6"><path d="M0 1 h7 l-3.5 4 z" fill="#222"/></svg>
<div class="a" style="left:566px;top:322px;width:22px;height:21px;background:#dedede;border:1px solid #bdbdbd"></div>
<div class="a" style="left:588px;top:322px;width:23px;height:21px;background:#dedede;border:1px solid #bdbdbd;border-radius:0 3px 3px 0"></div>
<svg class="a" style="left:570px;top:326px" width="40" height="13"><path d="M4 3 h6 v8 h-6 z M2 6 h10 v3 h-10z" fill="#2a4a7a"/><circle cx="7" cy="3" r="2" fill="#2a4a7a"/><path d="M27 3 h6 v8 h-6 z M25 6 h10 v3 h-10z" fill="#3a6aaa"/><circle cx="30" cy="3" r="2" fill="#3a6aaa"/></svg>
<svg class="a" style="left:619px;top:325px" width="12" height="14"><circle cx="6" cy="2.5" r="2" fill="#2a9a2a"/><path d="M2 5 h8 l-1 5 h-1 l1 4 h-2 l-1-3 l-1 3 h-2 l1-4 h-1 z" fill="#2a9a2a"/></svg>


<!-- horizontal separator -->
<div class="a" style="left:0;top:344px;width:637px;height:6px;background:#e2e2e2"></div>
<div class="a" style="left:0;top:349px;width:637px;height:1px;background:#a8a8a8"></div>

<!-- params panel -->
<div class="a hdr" style="left:0;top:350px;width:241px;height:26px"></div>
<div class="a" style="left:0;top:376px;width:241px;height:135px;background:#ffffff"></div>
<div class="a" style="left:240px;top:350px;width:2px;height:161px;background:#9c9c9c"></div>
<!-- params panel content -->
<svg class="a" style="left:0;top:350px" width="50" height="26"><rect x="20" y="8" width="11" height="9" fill="#eee" stroke="#555" stroke-width="0.9"/><rect x="22.5" y="10.5" width="6" height="4" fill="#777"/><rect x="6" y="24" width="38" height="2" fill="#3584d6"/></svg>
<div class="grip" style="left:204px;top:350px"><i style="left:13px;top:1px"></i><i style="left:1px;top:9.5px"></i><i style="left:25px;top:9.5px"></i><i style="left:13px;top:18px"></i></div>
<div class="a" style="left:0;top:392px;width:233px;height:1px;background:#ececec"></div>
<div class="a" style="left:99px;top:378px;width:1px;height:14px;background:#e6e6e6"></div>
<div class="a" style="left:199px;top:378px;width:1px;height:14px;background:#e6e6e6"></div>
<div class="a" style="left:216px;top:378px;width:1px;height:14px;background:#e6e6e6"></div>
<div class="t" style="left:4px;top:379px;font-size:9.2px;font-weight:bold;color:#8e8e8e">Name</div>
<div class="t" style="left:103px;top:379px;font-size:9.2px;font-weight:bold;color:#8e8e8e">Value</div>
<div class="t" style="left:219px;top:379px;font-size:9.2px;font-weight:bold;color:#8e8e8e">Typ</div>
<div style="position:absolute;left:0;top:392px;width:233px;height:106px;overflow:hidden;font-size:8.4px;color:#222;line-height:12.6px">
<div class="t" style="left:25px;top:0">Z Depth</div><div class="t" style="left:103px;top:0">0.000000</div><div class="t" style="left:219px;top:0">real</div>
<div class="t" style="left:25px;top:12.6px">Amount</div><div class="t" style="left:103px;top:12.6px">1.000000</div><div class="t" style="left:219px;top:12.6px">real</div>
<div class="t" style="left:25px;top:25.2px">Blend Method</div><div class="t" style="left:103px;top:25.2px">Composite</div><div class="t" style="left:219px;top:25.2px">integer</div>
<div class="t" style="left:25px;top:37.8px">Origin</div><div class="t" style="left:103px;top:37.8px">138.876925px,12.714575</div><div class="t" style="left:219px;top:37.8px">vector</div>
<div class="t" style="left:25px;top:50.4px">Transformation</div><div class="t" style="left:103px;top:50.4px">158.865071px,-31.43554</div><div class="t" style="left:219px;top:50.4px">transf</div>
<div class="t" style="left:25px;top:63px">Canvas</div><div class="t" style="left:103px;top:63px">&lt;Group&gt;</div><div class="t" style="left:219px;top:63px">canvas</div>
<div class="t" style="left:25px;top:75.6px">Time Offset</div><div class="t" style="left:103px;top:75.6px">0f</div><div class="t" style="left:219px;top:75.6px">time</div>
<div class="t" style="left:25px;top:88.2px">Children Lock</div><div class="t" style="left:219px;top:88.2px">bool</div>
<div class="t" style="left:25px;top:100.8px">Outline Grow</div><div class="t" style="left:103px;top:100.8px">0.000000</div>
</div>
<div class="a" style="left:199px;top:392px;width:18px;height:106px;background:#fff"></div>
<svg class="a" style="left:0;top:392px" width="233" height="110">
<path d="M14.5 3.5 Q15 2 17 2 H23.5 V4 H21.5 V10.5 H19.3 V4 H18 Q17.8 8 16.2 10.5 H14 Q15.8 8 15.8 4 Q15 4 14.5 4.5 Z" fill="#111"/>
<path d="M14.5 16.1 Q15 14.6 17 14.6 H23.5 V16.6 H21.5 V23.1 H19.3 V16.6 H18 Q17.8 20.6 16.2 23.1 H14 Q15.8 20.6 15.8 16.6 Q15 16.6 14.5 17.1 Z" fill="#111"/>
<rect x="15.5" y="26.5" width="6" height="9" rx="1.5" fill="none" stroke="#222" stroke-width="1.4" stroke-dasharray="2 1"/>
<circle cx="18.5" cy="44" r="4" fill="#9ed07a" stroke="#333" stroke-width="1.2"/>
<path d="M5 53 l3 3 l-3 3 z" fill="#222"/>
<rect x="14" y="66" width="9" height="7" fill="#444"/><rect x="15" y="68" width="3" height="2" fill="#ddd"/>
<circle cx="18.5" cy="81.5" r="4" fill="#f0c040" stroke="#222" stroke-width="1.3"/><path d="M18.5 79.5 v2 h2" stroke="#222" fill="none" stroke-width="0.8"/>
<path d="M15.5 91 a4 4 0 1 0 6 0" fill="none" stroke="#222" stroke-width="1.3"/><path d="M18.5 89 v4" stroke="#222" stroke-width="1.3"/>
<rect x="14" y="101" width="9" height="6" fill="#444"/>
<path d="M208 31 h5 v4 h-5z" fill="#2a9a2a"/><circle cx="210.5" cy="29" r="1.8" fill="#2a9a2a"/><path d="M207 35 h7 l-1 4 h-5 z" fill="#2a9a2a"/>
<rect x="100.5" y="88.5" width="11" height="10" rx="2" fill="#f0f0f0" stroke="#aaa"/>
</svg>
<div class="a" style="left:233px;top:377px;width:8px;height:124px;background:#f0f0f0"></div>
<div class="a" style="left:234px;top:380px;width:5px;height:60px;background:#b8b8b8;border-radius:3px"></div>
<div class="a" style="left:0;top:497px;width:241px;height:14px;background:#efefef"></div><div class="a" style="left:0;top:497px;width:233px;height:7px;background:#dedede"></div>
<div class="a" style="left:2px;top:498px;width:130px;height:5px;background:#b4b4b4;border-radius:3px"></div>


<!-- timetrack panel -->
<div class="a hdr" style="left:242px;top:350px;width:395px;height:26px"></div>
<div class="a" style="left:242px;top:376px;width:395px;height:135px;background:#ffffff"></div>
<div class="grip" style="left:600px;top:350px"><i style="left:13px;top:1px"></i><i style="left:1px;top:9.5px"></i><i style="left:25px;top:9.5px"></i><i style="left:13px;top:18px"></i></div>
<!-- timetrack content -->
<svg class="a" style="left:242px;top:350px" width="395" height="26">
<path d="M20 8.5 Q28 6 31 8.5 Q31 16 25 18 Q19 16 20 8.5 Z" fill="#7acc3a" stroke="#142814" stroke-width="1.6"/><path d="M23 10.5 l2 4 l3 -4.5" stroke="#142814" stroke-width="1" fill="none"/>
<path d="M62 17 v-4 l3 2 l3 -5 l3 3 l2 -5" stroke="#e07020" stroke-width="1.6" fill="none"/><path d="M60 18.5 h14" stroke="#333" stroke-width="1.3"/><circle cx="62" cy="13" r="1.3" fill="#2a5ac8"/>
<path d="M104 19 v-6 a5 5 0 0 1 10 0 v6 z" fill="#3a78c8" stroke="#1a4a8a" stroke-width="0.8"/><path d="M107 15 h4 M109 13 v4" stroke="#cde" stroke-width="1"/>
<rect x="149" y="8" width="10" height="10" fill="#f4f4f4" stroke="#555" stroke-width="0.9"/><rect x="149" y="8" width="10" height="2.5" fill="#666"/><rect x="151" y="12" width="3" height="3" fill="#e8c040"/>
<rect x="7" y="24" width="37" height="2" fill="#3584d6"/>
</svg>
<div class="a" style="left:244px;top:377px;width:381px;height:7px;background:#878787"></div>
<div class="a" style="left:244px;top:384px;width:381px;height:8px;background:#9b9b9b"></div>
<svg class="a" style="left:244px;top:377px" width="381" height="16">
<path d="M28 1 h10 l-5 5 z" fill="#111"/>
<g fill="#333"><rect x="12" y="7" width="1" height="2"/><rect x="54" y="7" width="1" height="2"/><rect x="75" y="7" width="1" height="2"/><rect x="95" y="7" width="1" height="2"/><rect x="116" y="7" width="1" height="2"/><rect x="137" y="7" width="1" height="2"/><rect x="158" y="7" width="1" height="2"/><rect x="178" y="7" width="1" height="2"/><rect x="199" y="7" width="1" height="2"/><rect x="220" y="7" width="1" height="2"/><rect x="241" y="7" width="1" height="2"/><rect x="282" y="7" width="1" height="2"/><rect x="303" y="7" width="1" height="2"/><rect x="324" y="7" width="1" height="2"/><rect x="344" y="7" width="1" height="2"/></g>
<text x="53" y="14" font-size="9" fill="#333">|120f'</text>
<text x="156" y="14" font-size="9" fill="#333">|240f'</text>
<text x="259" y="14" font-size="9" fill="#333">|360f'</text>
<text x="362" y="14" font-size="9" fill="#333">|480</text>
<path d="M172 9 v7" stroke="#e0c000" stroke-width="1.5"/>
</svg>
<svg class="a" style="left:244px;top:392px" width="381" height="106">
<path d="M35 0 V106" stroke="#8e8282" stroke-width="1" stroke-dasharray="9 2"/>
<path d="M173 0 V106" stroke="#5a5a5a" stroke-width="1" stroke-dasharray="9 2"/>
</svg>
<svg class="a" style="left:244px;top:392px" width="381" height="106" viewBox="244 392 381 106"><path d="M279 443.5 L283.5 448 L279 452.5 L274.5 448 Z" fill="#cc7722" stroke="#3a2a10" stroke-width="0.9"/><path d="M279 456.5 L283.5 461 L279 465.5 L274.5 461 Z" fill="#cc7722" stroke="#3a2a10" stroke-width="0.9"/><path d="M342 456.5 L346.5 461 L342 465.5 L337.5 461 Z" fill="#cc7722" stroke="#3a2a10" stroke-width="0.9"/><path d="M366 456.5 L370.5 461 L366 465.5 L361.5 461 Z" fill="#cc7722" stroke="#3a2a10" stroke-width="0.9"/><path d="M372 456.5 L376.5 461 L372 465.5 L367.5 461 Z" fill="#cc7722" stroke="#3a2a10" stroke-width="0.9"/><path d="M378 456.5 L382.5 461 L378 465.5 L373.5 461 Z" fill="#cc7722" stroke="#3a2a10" stroke-width="0.9"/><path d="M423 456.5 L427.5 461 L423 465.5 L418.5 461 Z" fill="#cc7722" stroke="#3a2a10" stroke-width="0.9"/><path d="M430 456.5 L434.5 461 L430 465.5 L425.5 461 Z" fill="#cc7722" stroke="#3a2a10" stroke-width="0.9"/><path d="M460 456.5 L464.5 461 L460 465.5 L455.5 461 Z" fill="#cc7722" stroke="#3a2a10" stroke-width="0.9"/><path d="M527 456.5 L531.5 461 L527 465.5 L522.5 461 Z" fill="#cc7722" stroke="#3a2a10" stroke-width="0.9"/><path d="M569 456.5 L573.5 461 L569 465.5 L564.5 461 Z" fill="#cc7722" stroke="#3a2a10" stroke-width="0.9"/><path d="M573 456.5 L577.5 461 L573 465.5 L568.5 461 Z" fill="#cc7722" stroke="#3a2a10" stroke-width="0.9"/><path d="M577 456.5 L581.5 461 L577 465.5 L572.5 461 Z" fill="#cc7722" stroke="#3a2a10" stroke-width="0.9"/><path d="M581 456.5 L585.5 461 L581 465.5 L576.5 461 Z" fill="#cc7722" stroke="#3a2a10" stroke-width="0.9"/><path d="M586 456.5 L590.5 461 L586 465.5 L581.5 461 Z" fill="#cc7722" stroke="#3a2a10" stroke-width="0.9"/><path d="M611 456.5 L615.5 461 L611 465.5 L606.5 461 Z" fill="#cc7722" stroke="#3a2a10" stroke-width="0.9"/><path d="M617 456.5 L621.5 461 L617 465.5 L612.5 461 Z" fill="#cc7722" stroke="#3a2a10" stroke-width="0.9"/><circle cx="594" cy="461" r="4.5" fill="#555" stroke="#222" stroke-width="0.8"/><circle cx="601" cy="461" r="4.5" fill="#555" stroke="#222" stroke-width="0.8"/>
<path d="M619 474 v12 l3 -3 l2 5 l2 -1 l-2 -5 h4 z" fill="#111" stroke="#fff" stroke-width="0.6"/>
</svg>
<div class="a" style="left:625px;top:377px;width:11px;height:124px;background:#f0f0f0"></div>
<div class="a" style="left:628px;top:379px;width:5px;height:73px;background:#b8b8b8;border-radius:3px"></div>
<div class="a" style="left:242px;top:497px;width:395px;height:14px;background:#efefef"></div><div class="a" style="left:244px;top:497px;width:383px;height:7px;background:#dedede"></div>
<div class="a" style="left:290px;top:498px;width:334px;height:5px;background:#b4b4b4;border-radius:3px"></div>


<!-- right panel -->
<div class="a" style="left:636px;top:28px;width:2px;height:483px;background:#9c9c9c"></div>
<div class="a hdr" style="left:638px;top:28px;width:182px;height:26px"></div>
<div class="a" style="left:638px;top:54px;width:182px;height:62px;background:#000"></div>
<div class="a tb" style="left:638px;top:116px;width:182px;height:25px"></div>
<div class="a hdr" style="left:638px;top:141px;width:182px;height:26px"></div>
<div class="a" style="left:638px;top:167px;width:182px;height:80px;background:#fff"></div>
<div class="a tb" style="left:638px;top:247px;width:182px;height:24px"></div>
<div class="a hdr" style="left:638px;top:271px;width:182px;height:26px"></div>
<div class="a" style="left:638px;top:297px;width:182px;height:189px;background:#fff"></div>
<div class="a tb" style="left:638px;top:486px;width:182px;height:25px"></div>
<!-- right panel: palette -->
<svg class="a" style="left:638px;top:28px" width="182" height="26">
<path d="M13 8 l-4 5 l4 5" stroke="#777" stroke-width="1.5" fill="none"/>
<path d="M132 8 l4 5 l-4 5" stroke="#777" stroke-width="1.5" fill="none"/>
<rect x="40" y="6" width="5" height="12" fill="#e0a030"/><rect x="45" y="12" width="5" height="6" fill="#d03030"/><rect x="50" y="10" width="4" height="8" fill="#4040c0"/><rect x="43" y="9" width="6" height="4" fill="#3050c0"/>
<circle cx="99" cy="13" r="6" fill="#2a78c8"/><rect x="98" y="11" width="2" height="6" fill="#fff"/><rect x="98" y="8" width="2" height="2" fill="#fff"/>
<rect x="18" y="24" width="52" height="2" fill="#3584d6"/>
</svg>
<div class="grip" style="left:784px;top:28px"><i style="left:13px;top:1px"></i><i style="left:1px;top:9.5px"></i><i style="left:25px;top:9.5px"></i><i style="left:13px;top:18px"></i></div>
<svg class="a" style="left:0;top:0" width="820" height="120" viewBox="0 0 820 120"><rect x="638" y="54" width="182" height="62" fill="#000"/><rect x="639.2" y="55.2" width="12.8" height="7.9" fill="#e8e8e8" stroke="#a8a8a8" stroke-width="0.8"/><rect x="654.4" y="55.2" width="12.8" height="7.9" fill="#000000" stroke="#a8a8a8" stroke-width="0.8"/><rect x="669.5" y="55.2" width="12.8" height="7.9" fill="#3f3f3f" stroke="#a8a8a8" stroke-width="0.8"/><rect x="684.7" y="55.2" width="12.8" height="7.9" fill="#5f5f5f" stroke="#a8a8a8" stroke-width="0.8"/><rect x="699.9" y="55.2" width="12.8" height="7.9" fill="#7f7f7f" stroke="#a8a8a8" stroke-width="0.8"/><rect x="715.0" y="55.2" width="12.8" height="7.9" fill="#9f9f9f" stroke="#a8a8a8" stroke-width="0.8"/><rect x="730.2" y="55.2" width="12.8" height="7.9" fill="#b4b4b4" stroke="#a8a8a8" stroke-width="0.8"/><rect x="745.4" y="55.2" width="12.8" height="7.9" fill="#c8c8c8" stroke="#a8a8a8" stroke-width="0.8"/><rect x="760.5" y="55.2" width="12.8" height="7.9" fill="#dadada" stroke="#a8a8a8" stroke-width="0.8"/><rect x="775.7" y="55.2" width="12.8" height="7.9" fill="#e8e8e8" stroke="#a8a8a8" stroke-width="0.8"/><rect x="790.9" y="55.2" width="12.8" height="7.9" fill="#f4f4f4" stroke="#a8a8a8" stroke-width="0.8"/><rect x="806.0" y="55.2" width="12.8" height="7.9" fill="#ffffff" stroke="#a8a8a8" stroke-width="0.8"/><rect x="639.2" y="65.5" width="12.8" height="7.9" fill="#8a3a10" stroke="#a8a8a8" stroke-width="0.8"/><rect x="654.4" y="65.5" width="12.8" height="7.9" fill="#955414" stroke="#a8a8a8" stroke-width="0.8"/><rect x="669.5" y="65.5" width="12.8" height="7.9" fill="#a1661a" stroke="#a8a8a8" stroke-width="0.8"/><rect x="684.7" y="65.5" width="12.8" height="7.9" fill="#ac7320" stroke="#a8a8a8" stroke-width="0.8"/><rect x="699.9" y="65.5" width="12.8" height="7.9" fill="#b68026" stroke="#a8a8a8" stroke-width="0.8"/><rect x="715.0" y="65.5" width="12.8" height="7.9" fill="#bf8b2e" stroke="#a8a8a8" stroke-width="0.8"/><rect x="730.2" y="65.5" width="12.8" height="7.9" fill="#c79536" stroke="#a8a8a8" stroke-width="0.8"/><rect x="745.4" y="65.5" width="12.8" height="7.9" fill="#cf9f3e" stroke="#a8a8a8" stroke-width="0.8"/><rect x="760.5" y="65.5" width="12.8" height="7.9" fill="#d6a946" stroke="#a8a8a8" stroke-width="0.8"/><rect x="775.7" y="65.5" width="12.8" height="7.9" fill="#dcb24e" stroke="#a8a8a8" stroke-width="0.8"/><rect x="790.9" y="65.5" width="12.8" height="7.9" fill="#e1ba56" stroke="#a8a8a8" stroke-width="0.8"/><rect x="806.0" y="65.5" width="12.8" height="7.9" fill="#e6c25e" stroke="#a8a8a8" stroke-width="0.8"/><rect x="639.2" y="75.9" width="12.8" height="7.9" fill="#ff1414" stroke="#a8a8a8" stroke-width="0.8"/><rect x="654.4" y="75.9" width="12.8" height="7.9" fill="#ff7a10" stroke="#a8a8a8" stroke-width="0.8"/><rect x="669.5" y="75.9" width="12.8" height="7.9" fill="#ffff28" stroke="#a8a8a8" stroke-width="0.8"/><rect x="684.7" y="75.9" width="12.8" height="7.9" fill="#6ef020" stroke="#a8a8a8" stroke-width="0.8"/><rect x="699.9" y="75.9" width="12.8" height="7.9" fill="#22e622" stroke="#a8a8a8" stroke-width="0.8"/><rect x="715.0" y="75.9" width="12.8" height="7.9" fill="#22ea80" stroke="#a8a8a8" stroke-width="0.8"/><rect x="730.2" y="75.9" width="12.8" height="7.9" fill="#20f0f0" stroke="#a8a8a8" stroke-width="0.8"/><rect x="745.4" y="75.9" width="12.8" height="7.9" fill="#1e86f0" stroke="#a8a8a8" stroke-width="0.8"/><rect x="760.5" y="75.9" width="12.8" height="7.9" fill="#1010e6" stroke="#a8a8a8" stroke-width="0.8"/><rect x="775.7" y="75.9" width="12.8" height="7.9" fill="#8c10e6" stroke="#a8a8a8" stroke-width="0.8"/><rect x="790.9" y="75.9" width="12.8" height="7.9" fill="#f010e8" stroke="#a8a8a8" stroke-width="0.8"/><rect x="806.0" y="75.9" width="12.8" height="7.9" fill="#f01088" stroke="#a8a8a8" stroke-width="0.8"/><rect x="639.2" y="86.2" width="12.8" height="7.9" fill="#f01010" stroke="#a8a8a8" stroke-width="0.8"/><rect x="654.4" y="86.2" width="12.8" height="7.9" fill="#f06c10" stroke="#a8a8a8" stroke-width="0.8"/><rect x="669.5" y="86.2" width="12.8" height="7.9" fill="#b4b020" stroke="#a8a8a8" stroke-width="0.8"/><rect x="684.7" y="86.2" width="12.8" height="7.9" fill="#12cc12" stroke="#a8a8a8" stroke-width="0.8"/><rect x="699.9" y="86.2" width="12.8" height="7.9" fill="#12d012" stroke="#a8a8a8" stroke-width="0.8"/><rect x="715.0" y="86.2" width="12.8" height="7.9" fill="#20d040" stroke="#a8a8a8" stroke-width="0.8"/><rect x="730.2" y="86.2" width="12.8" height="7.9" fill="#20c0c8" stroke="#a8a8a8" stroke-width="0.8"/><rect x="745.4" y="86.2" width="12.8" height="7.9" fill="#10a0e8" stroke="#a8a8a8" stroke-width="0.8"/><rect x="760.5" y="86.2" width="12.8" height="7.9" fill="#6464f0" stroke="#a8a8a8" stroke-width="0.8"/><rect x="775.7" y="86.2" width="12.8" height="7.9" fill="#c020e6" stroke="#a8a8a8" stroke-width="0.8"/><rect x="790.9" y="86.2" width="12.8" height="7.9" fill="#f020e0" stroke="#a8a8a8" stroke-width="0.8"/><rect x="806.0" y="86.2" width="12.8" height="7.9" fill="#f01098" stroke="#a8a8a8" stroke-width="0.8"/><rect x="639.2" y="96.5" width="12.8" height="7.9" fill="#c41010" stroke="#a8a8a8" stroke-width="0.8"/><rect x="654.4" y="96.5" width="12.8" height="7.9" fill="#b05010" stroke="#a8a8a8" stroke-width="0.8"/><rect x="669.5" y="96.5" width="12.8" height="7.9" fill="#909012" stroke="#a8a8a8" stroke-width="0.8"/><rect x="684.7" y="96.5" width="12.8" height="7.9" fill="#109012" stroke="#a8a8a8" stroke-width="0.8"/><rect x="699.9" y="96.5" width="12.8" height="7.9" fill="#109012" stroke="#a8a8a8" stroke-width="0.8"/><rect x="715.0" y="96.5" width="12.8" height="7.9" fill="#10a030" stroke="#a8a8a8" stroke-width="0.8"/><rect x="730.2" y="96.5" width="12.8" height="7.9" fill="#109096" stroke="#a8a8a8" stroke-width="0.8"/><rect x="745.4" y="96.5" width="12.8" height="7.9" fill="#1072b8" stroke="#a8a8a8" stroke-width="0.8"/><rect x="760.5" y="96.5" width="12.8" height="7.9" fill="#4444c4" stroke="#a8a8a8" stroke-width="0.8"/><rect x="775.7" y="96.5" width="12.8" height="7.9" fill="#9010c4" stroke="#a8a8a8" stroke-width="0.8"/><rect x="790.9" y="96.5" width="12.8" height="7.9" fill="#c010b4" stroke="#a8a8a8" stroke-width="0.8"/><rect x="806.0" y="96.5" width="12.8" height="7.9" fill="#c01070" stroke="#a8a8a8" stroke-width="0.8"/><rect x="639.2" y="106.9" width="12.8" height="7.9" fill="#620404" stroke="#a8a8a8" stroke-width="0.8"/><rect x="654.4" y="106.9" width="12.8" height="7.9" fill="#602004" stroke="#a8a8a8" stroke-width="0.8"/><rect x="669.5" y="106.9" width="12.8" height="7.9" fill="#404004" stroke="#a8a8a8" stroke-width="0.8"/><rect x="684.7" y="106.9" width="12.8" height="7.9" fill="#004004" stroke="#a8a8a8" stroke-width="0.8"/><rect x="699.9" y="106.9" width="12.8" height="7.9" fill="#004404" stroke="#a8a8a8" stroke-width="0.8"/><rect x="715.0" y="106.9" width="12.8" height="7.9" fill="#005010" stroke="#a8a8a8" stroke-width="0.8"/><rect x="730.2" y="106.9" width="12.8" height="7.9" fill="#004050" stroke="#a8a8a8" stroke-width="0.8"/><rect x="745.4" y="106.9" width="12.8" height="7.9" fill="#003264" stroke="#a8a8a8" stroke-width="0.8"/><rect x="760.5" y="106.9" width="12.8" height="7.9" fill="#101070" stroke="#a8a8a8" stroke-width="0.8"/><rect x="775.7" y="106.9" width="12.8" height="7.9" fill="#500070" stroke="#a8a8a8" stroke-width="0.8"/><rect x="790.9" y="106.9" width="12.8" height="7.9" fill="#600060" stroke="#a8a8a8" stroke-width="0.8"/><rect x="806.0" y="106.9" width="12.8" height="7.9" fill="#600040" stroke="#a8a8a8" stroke-width="0.8"/></svg>
<svg class="a" style="left:638px;top:116px" width="182" height="25">
<path d="M14 7 v10 M9 12 h10" stroke="#3a7ad0" stroke-width="3"/>
<rect x="31" y="6" width="11" height="12" fill="#eee" stroke="#555" stroke-width="0.9"/><path d="M34 9 h5 v4 h-5z" fill="#3a7ad0"/>
<path d="M53 7 h7 l3 3 v8 h-10 z" fill="#fff" stroke="#444" stroke-width="0.8"/><rect x="52" y="12" width="11" height="6" rx="1" fill="#3a78c8"/>
<path d="M74 9 a5 5 0 0 1 9 1 M83 15 a5 5 0 0 1 -9 -1" fill="none" stroke="#2a78c8" stroke-width="1.8"/>
</svg>
<!-- keyframes -->
<div class="a" style="left:638px;top:141px;width:182px;height:1px;background:#a8a8a8"></div>
<svg class="a" style="left:638px;top:141px" width="182" height="26">
<circle cx="20" cy="10" r="3.8" fill="none" stroke="#e0a020" stroke-width="2.5"/><path d="M18 13 l-5 6 M14 17 l2 2" stroke="#e0a020" stroke-width="2"/>
<path d="M62 9 q4 -3 7 0 q3 3 -1 6 l-4 -1 z" fill="#e8d070"/><path d="M60 12 h8" stroke="#c0a040" stroke-width="1"/>
<rect x="8" y="24" width="37" height="2" fill="#3584d6"/>
</svg>
<div class="grip" style="left:784px;top:141px"><i style="left:13px;top:1px"></i><i style="left:1px;top:9.5px"></i><i style="left:25px;top:9.5px"></i><i style="left:13px;top:18px"></i></div>
<div class="t" style="left:670px;top:169px;font-size:9.2px;font-weight:bold;color:#8e8e8e">Time</div>
<div class="t" style="left:713px;top:169px;font-size:9.2px;font-weight:bold;color:#8e8e8e">Length</div>
<div class="t" style="left:755px;top:169px;font-size:9.2px;font-weight:bold;color:#8e8e8e">Jump</div>
<div class="t" style="left:788px;top:169px;font-size:9.2px;font-weight:bold;color:#8e8e8e">Descri</div>
<div class="a" style="left:665px;top:169px;width:1px;height:12px;background:#e6e6e6"></div>
<div class="a" style="left:709px;top:169px;width:1px;height:12px;background:#e6e6e6"></div>
<div class="a" style="left:752px;top:169px;width:1px;height:12px;background:#e6e6e6"></div>
<div class="a" style="left:785px;top:169px;width:1px;height:12px;background:#e6e6e6"></div>
<div class="a" style="left:638px;top:182px;width:182px;height:15px;background:#3089e0"></div>
<div class="a" style="left:651px;top:184.5px;width:11px;height:10px;background:#fff;border:1px solid #777;border-radius:2px"></div>
<svg class="a" style="left:651px;top:184px" width="11" height="11"><path d="M2.5 5.5 l2.5 3 l4 -6" stroke="#111" stroke-width="1.8" fill="none"/></svg>
<div class="t" style="left:668px;top:185px;font-size:9px;color:#fff">0f</div>
<div class="t" style="left:713px;top:185px;font-size:9px;color:#fff">97f</div>
<div class="t" style="left:756px;top:185px;font-size:9px;color:#fff">(JMP)</div>
<div class="a" style="left:651px;top:198.5px;width:11px;height:10px;background:#f4f4f4;border:1px solid #999;border-radius:2px"></div>
<svg class="a" style="left:651px;top:198px" width="11" height="11"><path d="M2.5 5.5 l2.5 3 l4 -6" stroke="#111" stroke-width="1.8" fill="none"/></svg>
<div class="t" style="left:668px;top:199px;font-size:9px;color:#222">97f</div>
<div class="t" style="left:713px;top:199px;font-size:9px;color:#222">0f</div>
<div class="t" style="left:756px;top:199px;font-size:9px;color:#2a4aa0">(JMP)</div>
<div class="a" style="left:638px;top:238px;width:182px;height:9px;background:#f0f0f0"></div>
<div class="a" style="left:640px;top:240px;width:145px;height:5px;background:#b8b8b8;border-radius:3px"></div>
<svg class="a" style="left:638px;top:247px" width="182" height="24">
<path d="M14 6 v10 M9 11 h10" stroke="#3a7ad0" stroke-width="3"/>
<rect x="31" y="6" width="6" height="6" fill="#eee" stroke="#333" stroke-width="1"/><rect x="36" y="11" width="6" height="6" fill="#eee" stroke="#333" stroke-width="1"/>
<rect x="54" y="7" width="12" height="9" rx="2" fill="#3a78c8" stroke="#1a4a8a" stroke-width="0.8"/><rect x="54" y="10" width="12" height="2" fill="#ddd"/>
<rect x="75" y="6" width="11" height="11" fill="#f0f0f0" stroke="#555" stroke-width="0.9"/><path d="M78 9 l4 4 M80 9 h-2 v2" stroke="#222" stroke-width="1.3" fill="none"/>
</svg>
<!-- layers -->
<div class="a" style="left:638px;top:270px;width:182px;height:1px;background:#a8a8a8"></div>
<svg class="a" style="left:638px;top:271px" width="182" height="26">
<rect x="18" y="7" width="12" height="11" rx="1" fill="#6a9ad8" stroke="#2a5a9a" stroke-width="0.8"/><path d="M18 11 h12 M18 14 h12" stroke="#e0e8f8" stroke-width="1"/>
<rect x="8" y="24" width="37" height="2" fill="#3584d6"/>
</svg>
<div class="grip" style="left:784px;top:271px"><i style="left:13px;top:1px"></i><i style="left:1px;top:9.5px"></i><i style="left:25px;top:9.5px"></i><i style="left:13px;top:18px"></i></div>
<div class="t" style="left:657px;top:299px;font-size:9.2px;font-weight:bold;color:#8e8e8e">Icon</div>
<div class="t" style="left:742px;top:299px;font-size:9.2px;font-weight:bold;color:#8e8e8e">Name</div>
<div class="a" style="left:738px;top:299px;width:1px;height:12px;background:#e6e6e6"></div>
<div style="position:absolute;left:638px;top:297px;width:173px;height:182px;overflow:hidden"><div style="position:absolute;left:-638px;top:-297px;width:820px;height:511px"><div class="a" style="left:638px;top:313.0px;width:173px;height:15px;background:#3089e0"></div><div class="a" style="left:640px;top:315.0px;width:11px;height:11px;background:#fff;border:1px solid #666;border-radius:2px"></div><svg class="a" style="left:640px;top:315.0px" width="11" height="11"><path d="M2.5 5.5 l2.5 3 l4 -6" stroke="#111" stroke-width="1.8" fill="none"/></svg><svg class="a" style="left:656px;top:317.0px" width="8" height="8"><path d="M1 2 h6 l-3 4 z" fill="#fff"/></svg><svg class="a" style="left:696px;top:315.0px" width="13" height="11"><path d="M1.5 2 h4 l1 1.5 h5 v7 h-10 z" fill="#5cb040" stroke="#2a6a20" stroke-width="0.8"/><path d="M1.5 4.5 h10" stroke="#2a6a20" stroke-width="0.6"/></svg><div class="t" style="left:741px;top:315.0px;font-size:9.3px;color:#fff;">Group</div><div class="a" style="left:640px;top:329.6px;width:11px;height:11px;background:#f6f6f6;border:1px solid #aaa;border-radius:2px"></div><svg class="a" style="left:668px;top:330.6px" width="8" height="9"><path d="M2 1 v7 l4 -3.5 z" fill="#222"/></svg><svg class="a" style="left:701px;top:329.6px" width="13" height="11"><path d="M1.5 2 h4 l1 1.5 h5 v7 h-10 z" fill="#5cb040" stroke="#2a6a20" stroke-width="0.8"/><path d="M1.5 4.5 h10" stroke="#2a6a20" stroke-width="0.6"/></svg><div class="t" style="left:741px;top:329.6px;font-size:9.3px;color:#222;">Group</div><div class="a" style="left:640px;top:344.2px;width:11px;height:11px;background:#f6f6f6;border:1px solid #aaa;border-radius:2px"></div><svg class="a" style="left:640px;top:344.2px" width="11" height="11"><path d="M2.5 5.5 l2.5 3 l4 -6" stroke="#111" stroke-width="1.8" fill="none"/></svg><svg class="a" style="left:668px;top:345.2px" width="8" height="9"><path d="M2 1 v7 l4 -3.5 z" fill="#222"/></svg><svg class="a" style="left:701px;top:344.2px" width="13" height="11"><path d="M1.5 2 h4 l1 1.5 h5 v7 h-10 z" fill="#f0a830" stroke="#a06010" stroke-width="0.8"/><path d="M1.5 4.5 h10" stroke="#a06010" stroke-width="0.6"/></svg><div class="t" style="left:741px;top:344.2px;font-size:9.3px;color:#222;">15-4.sifz.lst</div><div class="a" style="left:640px;top:358.8px;width:11px;height:11px;background:#f6f6f6;border:1px solid #aaa;border-radius:2px"></div><svg class="a" style="left:640px;top:358.8px" width="11" height="11"><path d="M2.5 5.5 l2.5 3 l4 -6" stroke="#111" stroke-width="1.8" fill="none"/></svg><svg class="a" style="left:668px;top:360.8px" width="8" height="8"><path d="M1 2 h6 l-3 4 z" fill="#222"/></svg><svg class="a" style="left:701px;top:358.8px" width="13" height="11"><path d="M1.5 2 h4 l1 1.5 h5 v7 h-10 z" fill="#5cb040" stroke="#2a6a20" stroke-width="0.8"/><path d="M1.5 4.5 h10" stroke="#2a6a20" stroke-width="0.6"/></svg><div class="t" style="left:741px;top:358.8px;font-size:9.3px;color:#222;">[/home/zelgadis/</div><div class="a" style="left:640px;top:373.4px;width:11px;height:11px;background:#f6f6f6;border:1px solid #aaa;border-radius:2px"></div><svg class="a" style="left:640px;top:373.4px" width="11" height="11"><path d="M2.5 5.5 l2.5 3 l4 -6" stroke="#111" stroke-width="1.8" fill="none"/></svg><svg class="a" style="left:680px;top:375.4px" width="8" height="8"><path d="M1 2 h6 l-3 4 z" fill="#222"/></svg><svg class="a" style="left:707px;top:373.4px" width="13" height="11"><path d="M1.5 2 h4 l1 1.5 h5 v7 h-10 z" fill="#5cb040" stroke="#2a6a20" stroke-width="0.8"/><path d="M1.5 4.5 h10" stroke="#2a6a20" stroke-width="0.6"/></svg><div class="t" style="left:741px;top:373.4px;font-size:9.3px;color:#222;">Group</div><div class="a" style="left:640px;top:388.0px;width:11px;height:11px;background:#f6f6f6;border:1px solid #aaa;border-radius:2px"></div><svg class="a" style="left:640px;top:388.0px" width="11" height="11"><path d="M2.5 5.5 l2.5 3 l4 -6" stroke="#111" stroke-width="1.8" fill="none"/></svg><svg class="a" style="left:692px;top:390.0px" width="8" height="8"><path d="M1 2 h6 l-3 4 z" fill="#222"/></svg><svg class="a" style="left:713px;top:388.0px" width="13" height="11"><path d="M1.5 2 h4 l1 1.5 h5 v7 h-10 z" fill="#5cb040" stroke="#2a6a20" stroke-width="0.8"/><path d="M1.5 4.5 h10" stroke="#2a6a20" stroke-width="0.6"/></svg><div class="t" style="left:741px;top:388.0px;font-size:9.3px;color:#222;">Group</div><div class="a" style="left:640px;top:402.6px;width:11px;height:11px;background:#f6f6f6;border:1px solid #aaa;border-radius:2px"></div><svg class="a" style="left:704px;top:403.6px" width="8" height="9"><path d="M2 1 v7 l4 -3.5 z" fill="#222"/></svg><svg class="a" style="left:719px;top:402.6px" width="13" height="11"><path d="M1.5 2 h4 l1 1.5 h5 v7 h-10 z" fill="#f0a830" stroke="#a06010" stroke-width="0.8"/><path d="M1.5 4.5 h10" stroke="#a06010" stroke-width="0.6"/></svg><div class="t" style="left:741px;top:402.6px;font-size:9.3px;color:#222;">15-6.png</div><div class="a" style="left:640px;top:417.2px;width:11px;height:11px;background:#f6f6f6;border:1px solid #aaa;border-radius:2px"></div><svg class="a" style="left:640px;top:417.2px" width="11" height="11"><path d="M2.5 5.5 l2.5 3 l4 -6" stroke="#111" stroke-width="1.8" fill="none"/></svg><svg class="a" style="left:704px;top:419.2px" width="8" height="8"><path d="M1 2 h6 l-3 4 z" fill="#222"/></svg><svg class="a" style="left:719px;top:417.2px" width="13" height="11"><path d="M1.5 2 h4 l1 1.5 h5 v7 h-10 z" fill="#5cb040" stroke="#2a6a20" stroke-width="0.8"/><path d="M1.5 4.5 h10" stroke="#2a6a20" stroke-width="0.6"/></svg><div class="t" style="left:741px;top:417.2px;font-size:9.3px;color:#222;">Group</div><div class="a" style="left:640px;top:431.8px;width:11px;height:11px;background:#f6f6f6;border:1px solid #aaa;border-radius:2px"></div><svg class="a" style="left:640px;top:431.8px" width="11" height="11"><path d="M2.5 5.5 l2.5 3 l4 -6" stroke="#111" stroke-width="1.8" fill="none"/></svg><svg class="a" style="left:725px;top:431.8px" width="14" height="11"><path d="M3 7 l8 -3" stroke="#555" stroke-width="2.5"/><circle cx="2.5" cy="7.5" r="2" fill="#888"/><circle cx="11.5" cy="3.5" r="2" fill="#888"/></svg><div class="t" style="left:741px;top:431.8px;font-size:9.3px;color:#222;font-style:italic;">Skeleton</div><div class="a" style="left:640px;top:446.4px;width:11px;height:11px;background:#f6f6f6;border:1px solid #aaa;border-radius:2px"></div><svg class="a" style="left:640px;top:446.4px" width="11" height="11"><path d="M2.5 5.5 l2.5 3 l4 -6" stroke="#111" stroke-width="1.8" fill="none"/></svg><svg class="a" style="left:715px;top:447.4px" width="8" height="9"><path d="M2 1 v7 l4 -3.5 z" fill="#222"/></svg><svg class="a" style="left:726px;top:446.4px" width="13" height="11"><path d="M1.5 2 h4 l1 1.5 h5 v7 h-10 z" fill="#5cb040" stroke="#2a6a20" stroke-width="0.8"/><path d="M1.5 4.5 h10" stroke="#2a6a20" stroke-width="0.6"/></svg><div class="t" style="left:741px;top:446.4px;font-size:9.3px;color:#222;">Group</div><div class="a" style="left:640px;top:461.0px;width:11px;height:11px;background:#f6f6f6;border:1px solid #aaa;border-radius:2px"></div><svg class="a" style="left:640px;top:461.0px" width="11" height="11"><path d="M2.5 5.5 l2.5 3 l4 -6" stroke="#111" stroke-width="1.8" fill="none"/></svg><svg class="a" style="left:704px;top:462.0px" width="8" height="9"><path d="M2 1 v7 l4 -3.5 z" fill="#222"/></svg><svg class="a" style="left:719px;top:461.0px" width="13" height="11"><path d="M1.5 2 h4 l1 1.5 h5 v7 h-10 z" fill="#5cb040" stroke="#2a6a20" stroke-width="0.8"/><path d="M1.5 4.5 h10" stroke="#2a6a20" stroke-width="0.6"/></svg><div class="t" style="left:741px;top:461.0px;font-size:9.3px;color:#222;">man</div><div class="a" style="left:640px;top:475.6px;width:11px;height:11px;background:#f6f6f6;border:1px solid #aaa;border-radius:2px"></div><svg class="a" style="left:719px;top:475.6px" width="13" height="11"><path d="M1.5 2 h4 l1 1.5 h5 v7 h-10 z" fill="#f0a830" stroke="#a06010" stroke-width="0.8"/><path d="M1.5 4.5 h10" stroke="#a06010" stroke-width="0.6"/></svg></div></div>
<div class="a" style="left:811px;top:297px;width:9px;height:184px;background:#f0f0f0"></div>
<div class="a" style="left:813px;top:299px;width:5px;height:75px;background:#b8b8b8;border-radius:3px"></div>
<div class="a" style="left:638px;top:479px;width:173px;height:9px;background:#f0f0f0"></div>
<div class="a" style="left:640px;top:481px;width:65px;height:5px;background:#b8b8b8;border-radius:3px"></div>
<svg class="a" style="left:638px;top:488px" width="182" height="23">
<path d="M13 5 l6 6 h-3 v5 h-6 v-5 h-3 z" fill="#9ed080" stroke="#6aa050" stroke-width="0.7"/>
<path d="M36 16 l6 -6 h-3 v-5 h-6 v5 h-3 z" fill="#9ed080" stroke="#6aa050" stroke-width="0.7"/>
<rect x="52" y="4" width="1" height="15" fill="#d8d8d8"/>
<rect x="64" y="5" width="6" height="6" fill="#eee" stroke="#333" stroke-width="1"/><rect x="69" y="10" width="6" height="6" fill="#eee" stroke="#333" stroke-width="1"/>
<path d="M84 6 h5 l1 1.5 h7 v8 h-13 z" fill="#5cb040" stroke="#2a6a20" stroke-width="0.8"/>
<path d="M107 7 h5 l1 1.5 h7 v7 h-13 z" fill="#5cb040" stroke="#2a6a20" stroke-width="0.8"/><path d="M109 11 h11" stroke="#2a6a20" stroke-width="0.6"/>
<rect x="127" y="6" width="13" height="9" rx="2" fill="#3a78c8" stroke="#1a4a8a" stroke-width="0.8"/><rect x="127" y="9" width="13" height="2" fill="#ddd"/><path d="M129 15 v3 M132 15 v3 M135 15 v3 M138 15 v3" stroke="#3a78c8" stroke-width="1"/>
<rect x="150" y="4" width="1" height="15" fill="#d8d8d8"/>
<path d="M164 9 h7 l-3.5 4 z" fill="#111"/>
</svg>
<div class="a" style="left:818px;top:0;width:2px;height:511px;background:#2e2d2b"></div>

</body></html>
